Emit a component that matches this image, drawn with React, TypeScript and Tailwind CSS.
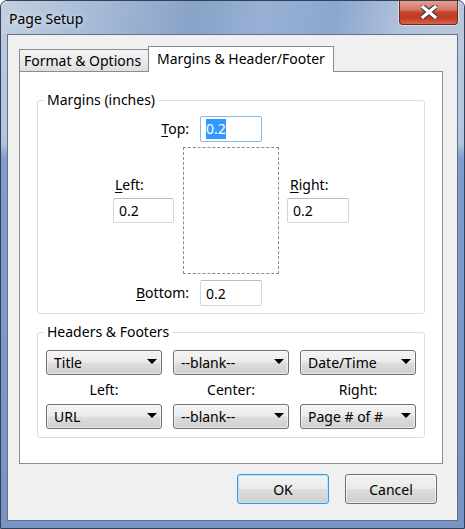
import React from 'react';

const Field = ({ value, focused }: { value: string; focused?: boolean }) => (
  <div
    className={
      focused
        ? 'h-full w-full flex items-center pl-[5px] bg-white border border-[#8ab9e8] rounded-[2px]'
        : 'h-full w-full flex items-center pl-[5px] bg-white border border-[#d3d7de] border-t-[#b9bcc3] rounded-[2px]'
    }
  >
    {focused ? <span className="bg-[#3399ff] text-white leading-[20px]">{value}</span> : <span>{value}</span>}
  </div>
);

const Select = ({ value }: { value: string }) => (
  <div className="h-[25px] flex items-center justify-between pl-[7px] pr-[4px] rounded-[3px] border border-[#707070] bg-[linear-gradient(180deg,#f4f4f4_0%,#ebebeb_48%,#dddddd_52%,#cfcfcf_100%)] shadow-[inset_0_0_0_1px_rgba(255,255,255,0.55)]">
    <span className="leading-[20px]">{value}</span>
    <svg width="10" height="5" viewBox="0 0 10 5" className="mb-[3px]">
      <path d="M0 0h10L5 5z" fill="#000" />
    </svg>
  </div>
);

const Button = ({ label, primary }: { label: string; primary?: boolean }) => (
  <div
    className={
      primary
        ? 'w-[92px] h-[30px] flex items-center justify-center rounded-[3px] border border-[#3c9bd6] bg-[linear-gradient(180deg,#f2f2f2_0%,#ebebeb_48%,#dddddd_52%,#cfcfcf_100%)] shadow-[inset_0_0_0_1px_#b4e3fa]'
        : 'w-[92px] h-[30px] flex items-center justify-center rounded-[3px] border border-[#707070] bg-[linear-gradient(180deg,#f2f2f2_0%,#ebebeb_48%,#dddddd_52%,#cfcfcf_100%)] shadow-[inset_0_0_0_1px_rgba(255,255,255,0.6)]'
    }
  >
    {label}
  </div>
);

export default function App() {
  return (
    <div className="w-[465px] h-[529px] flex flex-col px-[6px] pb-[7px] rounded-t-[7px] border border-[#33405a] bg-[linear-gradient(180deg,#bccadf_0%,#b3c4dc_27%,#7f9cca_30%,#7894c4_100%)] font-['Noto_Sans','Open_Sans',sans-serif] text-[14px] text-black overflow-hidden">
      {/* Title bar */}
      <div className="-mx-[6px] h-[33px] flex items-start justify-between pl-[8px] pr-[6px] bg-[linear-gradient(100deg,#c3d0e1_0%,#aabdd8_18%,#88a2c8_42%,#98b0d5_56%,#8ca7cf_72%,#b0c1db_86%,#b9c7dc_100%)]">
        <div className="mt-[8px] leading-[20px] [text-shadow:0_0_6px_rgba(255,255,255,0.8)]">Page Setup</div>
        <div className="-mt-px w-[59px] h-[25px] flex items-center justify-center rounded-b-[4px] border border-t-0 border-[#6e2b20] bg-[linear-gradient(180deg,#e8a496_0%,#d67866_40%,#c5412a_52%,#c13a22_75%,#d8654d_100%)] shadow-[0_0_0_1px_rgba(255,255,255,0.45)]">
          <svg width="16" height="14" viewBox="0 0 16 14">
            <path d="M2 2L14 12M14 2L2 12" stroke="#3a3a3a" strokeWidth="5.5" strokeLinecap="square" />
            <path d="M2 2L14 12M14 2L2 12" stroke="#ffffff" strokeWidth="3.2" strokeLinecap="square" />
          </svg>
        </div>
      </div>

      {/* Dialog body */}
      <div className="flex-1 flex flex-col border border-[#62708a] bg-[#f0f0f0] pt-[11px] pl-[11px] pr-[14px]">
        {/* Tabs */}
        <div className="flex items-end h-[25px]">
          <div className="w-[129px] h-[22px] flex items-center pl-[4px] border-l border-t border-[#898c95] bg-[linear-gradient(180deg,#f3f3f3_0%,#ebebeb_50%,#dedede_100%)]">
            Format &amp; Options
          </div>
          <div className="relative z-10 w-[186px] h-[26px] -mb-px flex items-center pl-[8px] pb-[2px] border-l border-t border-r border-[#898c95] bg-white">
            Margins &amp; Header/Footer
          </div>
        </div>

        {/* Tab panel */}
        <div className="h-[393px] border border-[#898c95] bg-white pt-[18px] px-[17px]">
          {/* Margins */}
          <fieldset className="border border-[#d5dfe5] rounded-[3px] pb-[7px]">
            <legend className="ml-[6px] px-[3px] leading-[20px]">Margins (inches)</legend>

            <div className="mt-[6px] grid grid-cols-[1fr_62px_1fr] h-[26px] items-center">
              <div className="text-right pr-[11px] leading-[20px]">
                <u className="underline-offset-2">T</u>op:
              </div>
              <Field value="0.2" focused />
              <div />
            </div>

            <div className="mt-[5px] flex justify-center">
              <div className="w-[61px] pt-[28px] flex flex-col">
                <div className="pl-[2px] leading-[20px]">
                  <u className="underline-offset-2">L</u>eft:
                </div>
                <div className="mt-[3px] h-[25px]">
                  <Field value="0.2" />
                </div>
              </div>
              <div className="ml-[9px] mr-[8px] w-[96px] h-[127px] border border-dashed border-[#8c8c8c]" />
              <div className="w-[62px] pt-[28px] flex flex-col">
                <div className="pl-[3px] leading-[20px]">
                  <u className="underline-offset-2">R</u>ight:
                </div>
                <div className="mt-[3px] h-[25px]">
                  <Field value="0.2" />
                </div>
              </div>
            </div>

            <div className="mt-[6px] grid grid-cols-[1fr_62px_1fr] h-[26px] items-center">
              <div className="text-right pr-[11px] leading-[20px]">
                <u className="underline-offset-2">B</u>ottom:
              </div>
              <Field value="0.2" />
              <div />
            </div>
          </fieldset>

          {/* Headers & Footers */}
          <fieldset className="mt-[8px] border border-[#d5dfe5] rounded-[3px] px-[8px] pb-[8px]">
            <legend className="-ml-[2px] px-[3px] leading-[20px]">Headers &amp; Footers</legend>
            <div className="mt-[8px] grid grid-cols-3 gap-x-[11px]">
              <Select value="Title" />
              <Select value="--blank--" />
              <Select value="Date/Time" />
              <div className="text-center leading-[20px] pt-[5px] pb-[4px]">Left:</div>
              <div className="text-center leading-[20px] pt-[5px] pb-[4px]">Center:</div>
              <div className="text-center leading-[20px] pt-[5px] pb-[4px]">Right:</div>
              <Select value="URL" />
              <Select value="--blank--" />
              <Select value="Page # of #" />
            </div>
          </fieldset>
        </div>

        {/* Buttons */}
        <div className="mt-[10px] flex justify-end gap-[16px] pr-[6px]">
          <Button label="OK" primary />
          <Button label="Cancel" />
        </div>
      </div>
    </div>
  );
}
